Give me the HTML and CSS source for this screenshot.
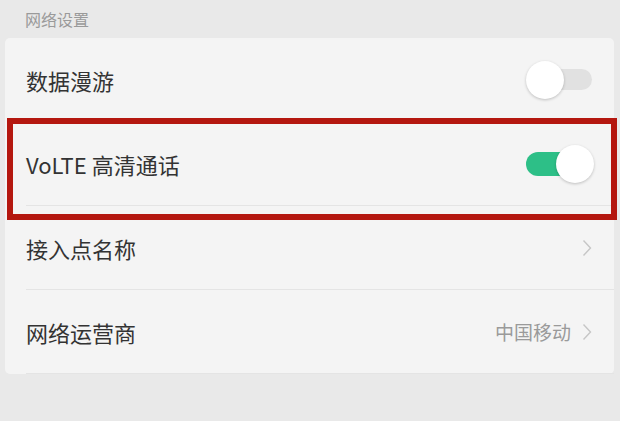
FILE: index.html
```html
<!DOCTYPE html>
<html lang="zh-CN">
<head>
    <meta charset="UTF-8">
    <meta name="viewport" content="width=device-width, initial-scale=1.0">
    <title>网络设置</title>
<link rel="stylesheet" href="styles.css">
</head>

<body>
    <div class="section-title">网络设置</div>

    <div class="card">
        <div class="row">
            <span class="label">数据漫游</span>
            <span class="switch"><span class="knob"></span></span>
        </div>

        <div class="row">
            <span class="label">VoLTE 高清通话</span>
            <span class="switch on"><span class="knob"></span></span>
        </div>

        <div class="row">
            <span class="label">接入点名称</span>
            <svg class="chevron" width="10" height="18" viewBox="0 0 10 18">
                <path d="M1.5 1.5 L8.5 9 L1.5 16.5" fill="none" stroke="#c6c6c6" stroke-width="1.4"/>
            </svg>
        </div>

        <div class="row">
            <span class="label">网络运营商</span>
            <span class="value">中国移动</span>
            <svg class="chevron" width="10" height="18" viewBox="0 0 10 18">
                <path d="M1.5 1.5 L8.5 9 L1.5 16.5" fill="none" stroke="#c6c6c6" stroke-width="1.4"/>
            </svg>
        </div>

        <!-- highlight around the VoLTE row -->
        <div class="highlight"></div>
    </div>
</body>
</html>
```

FILE: styles.css
```css
body {
    margin: 0;
    padding: 0;
    background-color: #e9e9e9;
    font-family: 'Noto Sans CJK SC', 'Noto Sans', sans-serif;
    color: #333;
}

.section-title {
    height: 38px;
    padding-left: 25px;
    font-size: 16px;
    line-height: 38px;
    color: #9a9a9a;
}

.card {
    position: relative;
    margin: 0 6px 0 5px;
    background-color: #f4f4f4;
    border-radius: 5px;
}

.row {
    height: 84px;
    display: flex;
    align-items: center;
    margin-left: 21px;
    padding-right: 22px;
    border-bottom: 1px solid #e4e4e4;
    box-sizing: border-box;
}

.row:last-of-type {
    border-bottom: none;
}

.label {
    flex: 1;
    font-size: 22px;
    color: #333;
}

.value {
    font-size: 19px;
    color: #9a9a9a;
    margin-right: 11px;
}

.chevron {
    display: block;
}

.switch {
    position: relative;
    width: 66px;
    height: 40px;
    display: flex;
    align-items: center;
}

.switch::before {
    content: '';
    display: block;
    margin-left: 14px;
    width: 52px;
    height: 21px;
    border-radius: 11px;
    background-color: #e1e1e1;
}

.switch.on::before {
    margin-left: 0;
    width: 48px;
    height: 24px;
    border-radius: 12px;
    background-color: #2dbf87;
}

.knob {
    position: absolute;
    left: 0;
    top: 1px;
    width: 38px;
    height: 38px;
    border-radius: 50%;
    background-color: #fff;
    box-shadow: 0 1px 3px rgba(0, 0, 0, 0.22);
}

.switch.on .knob {
    left: 30px;
}

.highlight {
    position: absolute;
    left: 2px;
    right: -3px;
    top: 80px;
    height: 102px;
    border: 6px solid #b4170f;
    box-sizing: border-box;
    pointer-events: none;
}
```
